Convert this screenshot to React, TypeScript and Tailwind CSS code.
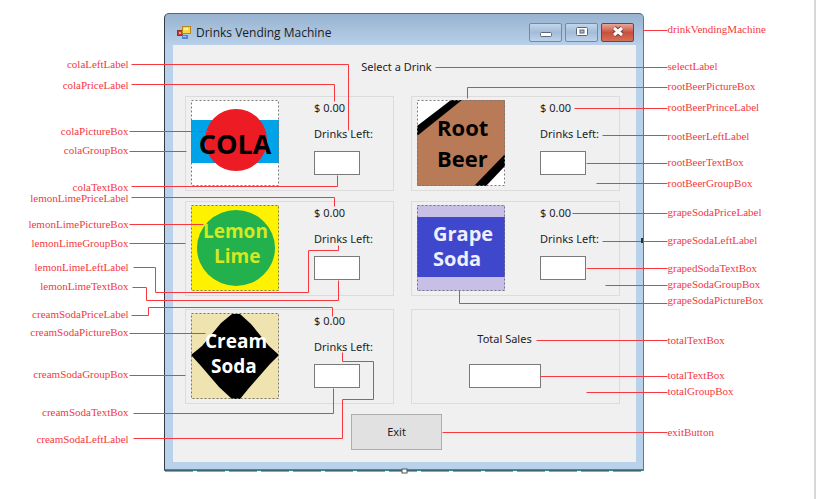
import React from 'react';
import { clsx } from 'clsx';

interface Callout {
    text: string;
    top: string;
    line: string;
}

// Lines are drawn on an 816 x 499 canvas that stretches with the figure
const leftCallouts: Callout[] = [
    { text: 'colaLeftLabel', top: 'top-[57px]', line: 'M131 64H348V130' },
    { text: 'colaPriceLabel', top: 'top-[78px]', line: 'M131 84H334V101' },
    { text: 'colaPictureBox', top: 'top-[124px]', line: 'M129 131H208' },
    { text: 'colaGroupBox', top: 'top-[143px]', line: 'M129 151H186' },
    { text: 'colaTextBox', top: 'top-[180px]', line: 'M131 186H337V175' },
    { text: 'lemonLimePriceLabel', top: 'top-[191px]', line: 'M131 197H334V206' },
    { text: 'lemonLimePictureBox', top: 'top-[217px]', line: 'M129 224H203' },
    { text: 'lemonLimeGroupBox', top: 'top-[236px]', line: 'M129 243H185' },
    { text: 'lemonLimeLeftLabel', top: 'top-[260px]', line: 'M133 267H155V292H308V250H338V245' },
    { text: 'lemonLimeTextBox', top: 'top-[279px]', line: 'M132 287H146V300H338V280' },
    { text: 'creamSodaPriceLabel', top: 'top-[307px]', line: 'M131 315H148V307H332V316' },
    { text: 'creamSodaPictureBox', top: 'top-[325px]', line: 'M129 333H205' },
    { text: 'creamSodaGroupBox', top: 'top-[367px]', line: 'M129 375H185' },
    { text: 'creamSodaTextBox', top: 'top-[405px]', line: 'M133 413H333V388' },
    { text: 'creamSodaLeftLabel', top: 'top-[432px]', line: 'M133 438H342V399H373V361H342V352' },
];

const rightCallouts: Callout[] = [
    { text: 'drinkVendingMachine', top: 'top-[22px]', line: 'M643 30H667' },
    { text: 'selectLabel', top: 'top-[59px]', line: 'M435 67H667' },
    { text: 'rootBeerPictureBox', top: 'top-[79px]', line: 'M467 98V87H667' },
    { text: 'rootBeerPrinceLabel', top: 'top-[100px]', line: 'M574 108H667' },
    { text: 'rootBeerLeftLabel', top: 'top-[129px]', line: 'M602 135H667' },
    { text: 'rootBeerTextBox', top: 'top-[155px]', line: 'M586 163H667' },
    { text: 'rootBeerGroupBox', top: 'top-[176px]', line: 'M596 183H667' },
    { text: 'grapeSodaPriceLabel', top: 'top-[205px]', line: 'M572 213H667' },
    { text: 'grapeSodaLeftLabel', top: 'top-[233px]', line: 'M602 241H667' },
    { text: 'grapedSodaTextBox', top: 'top-[261px]', line: 'M586 268H667' },
    { text: 'grapeSodaGroupBox', top: 'top-[277px]', line: 'M605 285H667' },
    { text: 'grapeSodaPictureBox', top: 'top-[293px]', line: 'M459 290V303H667' },
    { text: 'totalTextBox', top: 'top-[333px]', line: 'M536 340H667' },
    { text: 'totalTextBox', top: 'top-[368px]', line: 'M540 376H667' },
    { text: 'totalGroupBox', top: 'top-[384px]', line: 'M586 392H667' },
    { text: 'exitButton', top: 'top-[425px]', line: 'M442 432H667' },
];

function Picture({ label, children }: { label: string; children: React.ReactNode }) {
    return (
        <svg
            role="img"
            aria-label={label}
            viewBox="0 0 88 86"
            className="h-[86px] w-[88px] shrink-0 font-['Open_Sans','Noto_Sans',sans-serif] font-bold"
        >
            {children}
            <rect x="0.5" y="0.5" width="87" height="85" fill="none" stroke="#77777a" strokeDasharray="2 2" />
        </svg>
    );
}

function Cola() {
    return (
        <Picture label="Cola">
            <rect width="88" height="86" fill="#fff" />
            <rect y="20" width="88" height="43" fill="#00a2e8" />
            <circle cx="45" cy="40" r="31" fill="#ed1c24" />
            <text x="44" y="54" fontSize="27" textAnchor="middle">COLA</text>
        </Picture>
    );
}

function RootBeer() {
    return (
        <Picture label="Root Beer">
            <rect width="88" height="86" fill="#b97a57" />
            <path d="M0 0H35L0 29Z" fill="#fff" />
            <path d="M34 0H45L0 36V26Z" />
            <path d="M88 86V60L63 86Z" fill="#fff" />
            <path d="M88 54V66L69 86H57Z" />
            <text x="20" y="36" fontSize="22">Root</text>
            <text x="20" y="67" fontSize="22">Beer</text>
        </Picture>
    );
}

function LemonLime() {
    return (
        <Picture label="Lemon Lime">
            <rect width="88" height="86" fill="#fff200" />
            <ellipse cx="45" cy="43" rx="39" ry="38" fill="#22b14c" />
            <g fill="#d6e821" fontSize="19">
                <text x="12" y="33">Lemon</text>
                <text x="23" y="58">Lime</text>
            </g>
        </Picture>
    );
}

function GrapeSoda() {
    return (
        <Picture label="Grape Soda">
            <rect width="88" height="86" fill="#c8bfe7" />
            <rect y="12" width="88" height="60" fill="#3f48cc" />
            <g fill="#eef0ff" fontSize="20">
                <text x="16" y="36">Grape</text>
                <text x="16" y="61">Soda</text>
            </g>
        </Picture>
    );
}

function CreamSoda() {
    return (
        <Picture label="Cream Soda">
            <rect width="88" height="86" fill="#efe4b0" />
            <path d="M41 1H49L60 11L78 33L88 42L79 51L58 75L49 86H41L28 74L10 53L0 42L11 33L30 10Z" />
            <g fill="#fff" fontSize="19">
                <text x="14" y="35">Cream</text>
                <text x="20" y="60">Soda</text>
            </g>
        </Picture>
    );
}

function DrinkGroup({ id, children }: { id: string; children: React.ReactNode }) {
    return (
        <section className="flex h-[95px] gap-[35px] border border-[#dcdcdc] pt-[3px] pl-[5px]">
            {children}
            <div className="flex flex-col items-start">
                <span>$ 0.00</span>
                <label htmlFor={id} className="mt-[10px] whitespace-nowrap">Drinks Left:</label>
                <input id={id} type="text" className="mt-[9px] h-6 w-[46px] border border-[#7a7a7a] bg-white px-1" />
            </div>
        </section>
    );
}

function CaptionButton({ label, close, children }: { label: string; close?: boolean; children: React.ReactNode }) {
    return (
        <button
            type="button"
            aria-label={label}
            className={clsx(
                'flex h-[19px] w-[33px] items-center justify-center rounded-[2px] border',
                close
                    ? 'border-[#74404a] bg-linear-to-b from-[#e5a79c] via-[#c8503c] to-[#d4705a]'
                    : 'border-[#7389a5] bg-linear-to-b from-[#c3d6eb] via-[#a3bcd8] to-[#bdd3ea]',
            )}
        >
            <svg viewBox="0 0 14 12" className="h-3 w-[14px]">{children}</svg>
        </button>
    );
}

function TitleBar() {
    return (
        <header className="flex h-[31px] items-center pt-[7px] pl-1">
            <svg viewBox="0 0 14 14" className="h-[14px] w-[14px]" aria-hidden="true">
                <rect x="0.5" y="4.5" width="5" height="5" fill="#cf3a28" stroke="#96301f" />
                <rect x="2" y="6" width="2" height="2" fill="#f2a08e" />
                <rect x="5.5" y="0.5" width="8" height="7" fill="#fad646" stroke="#b58a1c" />
                <rect x="7" y="2" width="4" height="2" fill="#fff0a0" />
                <rect x="5" y="9" width="6" height="4" fill="#4f86e0" />
                <rect x="6" y="10" width="3" height="1" fill="#a5c6f8" />
            </svg>
            <h1 className="ml-[5px] text-[12px] whitespace-nowrap">Drinks Vending Machine</h1>
            <div className="mr-[2px] mb-[2px] ml-auto flex gap-[3px]">
                <CaptionButton label="Minimize">
                    <rect x="1.5" y="6.5" width="11" height="4" rx="1" fill="#fff" stroke="#5a6678" />
                </CaptionButton>
                <CaptionButton label="Maximize">
                    <rect x="1.5" y="1.5" width="11" height="8" rx="1" fill="#fff" stroke="#5a6678" />
                    <rect x="5" y="4" width="4" height="3" fill="#a3bcd8" stroke="#5a6678" />
                </CaptionButton>
                <CaptionButton label="Close" close>
                    <path d="M3 2L11 9M11 2L3 9" stroke="#7c3b3b" strokeWidth="5" />
                    <path d="M3 2L11 9M11 2L3 9" stroke="#fff" strokeWidth="3" />
                </CaptionButton>
            </div>
        </header>
    );
}

function VendingWindow() {
    return (
        <div className="rounded-t-[5px] border border-t-[#5c6670] border-r-[#2f8ca3] border-b-2 border-b-[#3f8c98] border-l-[#343b45] bg-[#b9d1ea] bg-linear-to-b from-[#98b3d0] to-[#b9d1ea] to-[32px] pr-[7px] pb-[7px] pl-2 font-['Open_Sans','Noto_Sans',sans-serif] text-[11px] leading-4 text-[#1c1c24]">
            <TitleBar />
            <main className="bg-[#f0f0f0] pt-[14px] pr-4 pb-3 pl-3 font-['Noto_Sans',sans-serif]">
                <p className="pr-3 text-center">Select a Drink</p>
                <div className="mt-[21px] flex flex-col gap-[10px]">
                    <div className="grid grid-cols-2 gap-[17px]">
                        <DrinkGroup id="cola"><Cola /></DrinkGroup>
                        <DrinkGroup id="rootBeer"><RootBeer /></DrinkGroup>
                    </div>
                    <div className="grid grid-cols-2 gap-[17px]">
                        <DrinkGroup id="lemonLime"><LemonLime /></DrinkGroup>
                        <DrinkGroup id="grapeSoda"><GrapeSoda /></DrinkGroup>
                    </div>
                    <div className="mt-[3px] grid grid-cols-2 gap-[17px]">
                        <DrinkGroup id="creamSoda"><CreamSoda /></DrinkGroup>
                        <section className="flex h-[95px] flex-col items-center border border-[#dcdcdc] pt-[21px] pr-[22px]">
                            <label htmlFor="total">Total Sales</label>
                            <input id="total" type="text" className="mt-[17px] h-6 w-[72px] border border-[#7a7a7a] bg-white px-1" />
                        </section>
                    </div>
                </div>
                <div className="mt-[10px] flex justify-center pr-3">
                    <button type="button" className="h-9 w-[91px] border border-[#adadad] bg-[#e1e1e1]">Exit</button>
                </div>
            </main>
        </div>
    );
}

export default function App() {
    return (
        <div className="relative grid grid-cols-[164fr_480fr_170fr] border-r-2 border-[#d8d8d8] bg-white pt-[13px] pb-7">
            <div />
            <VendingWindow />
            <div />

            {/* Callout lines over the window */}
            <svg
                viewBox="0 0 816 499"
                preserveAspectRatio="none"
                className="pointer-events-none absolute inset-y-0 left-0 h-full w-screen"
                aria-hidden="true"
            >
                <path d="M165 471H644" stroke="#3a4248" strokeDasharray="28 4" />
                <g fill="none" stroke="#f8383e" transform="translate(0.5 0.5)">
                    {[...leftCallouts, ...rightCallouts].map((c) => (
                        <path key={c.line} d={c.line} />
                    ))}
                </g>
                <path d="M641 238H643V243H641Z" fill="#233" />
                <rect x="402" y="469" width="5" height="4" fill="#fff" stroke="#555" />
            </svg>

            <div className="pointer-events-none absolute inset-0 font-['Liberation_Serif',serif] text-[11px] leading-[14px] text-[#f4383e]">
                {leftCallouts.map((c) => (
                    <span key={c.line} className={clsx('absolute right-[84.2%]', c.top)}>{c.text}</span>
                ))}
                {rightCallouts.map((c) => (
                    <span key={c.line} className={clsx('absolute left-[82%]', c.top)}>{c.text}</span>
                ))}
            </div>
        </div>
    );
}
